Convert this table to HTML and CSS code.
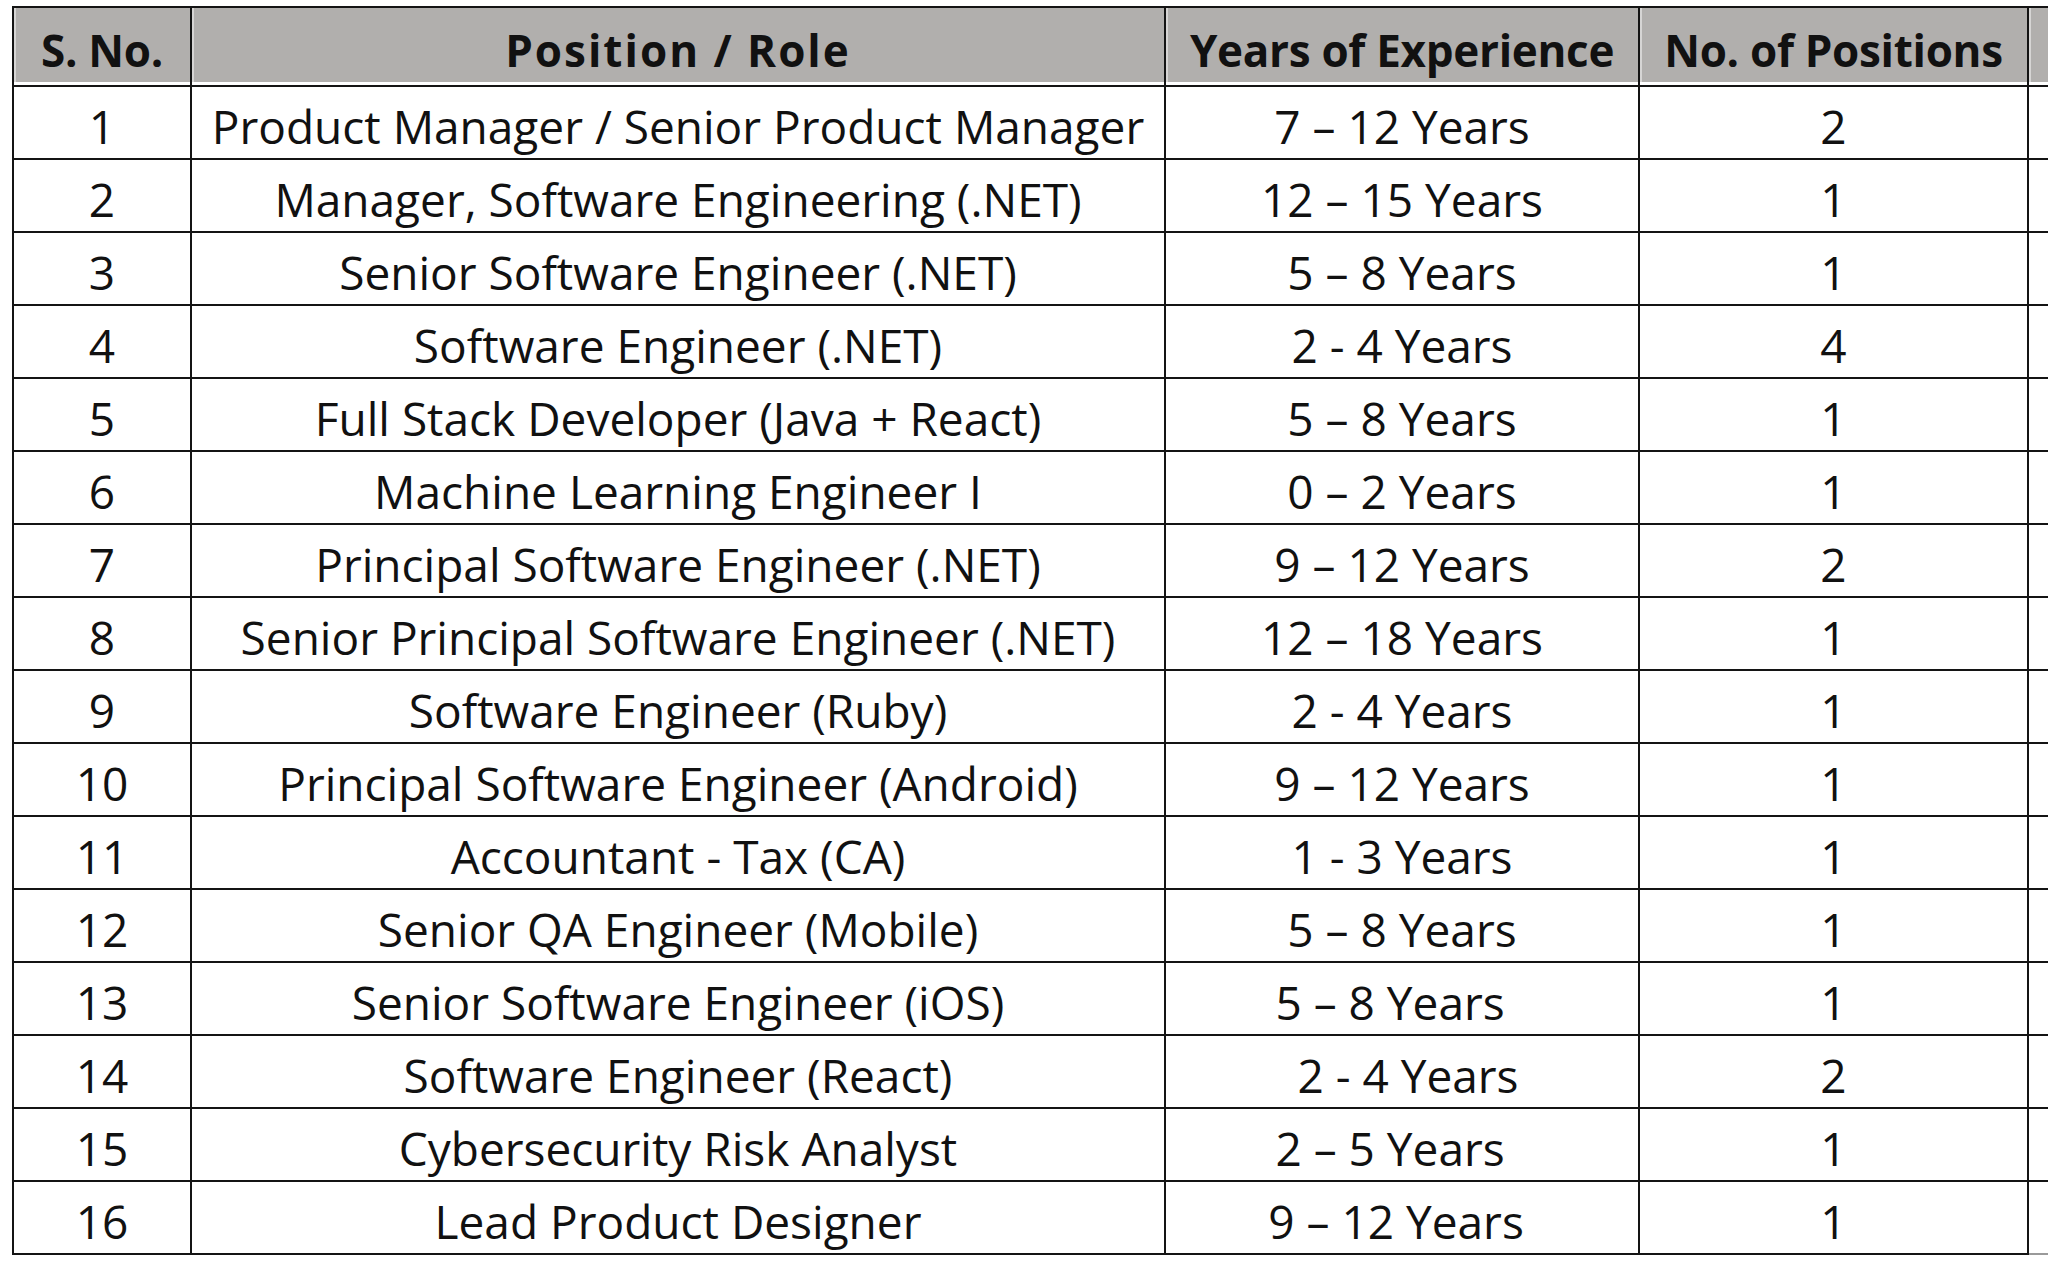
FILE: index.html
```html
<!DOCTYPE html>
<html lang="en">
<head>
<meta charset="utf-8">
<title>Open Positions</title>
<link rel="stylesheet" href="styles.css">
</head>
<body>
<div class="sheet">
  <table class="grid">
    <colgroup>
      <col class="c-no">
      <col class="c-role">
      <col class="c-exp">
      <col class="c-pos">
      <col class="c-extra">
    </colgroup>
    <thead>
      <tr>
        <th>S. No.</th>
        <th class="wide">Position / Role</th>
        <th>Years of Experience</th>
        <th>No. of Positions</th>
        <th class="extra"></th>
      </tr>
    </thead>
    <tbody>
      <tr><td>1</td><td>Product Manager / Senior Product Manager</td><td>7 – 12 Years</td><td>2</td><td class="extra"></td></tr>
      <tr><td>2</td><td>Manager, Software Engineering (.NET)</td><td>12 – 15 Years</td><td>1</td><td class="extra"></td></tr>
      <tr><td>3</td><td>Senior Software Engineer (.NET)</td><td>5 – 8 Years</td><td>1</td><td class="extra"></td></tr>
      <tr><td>4</td><td>Software Engineer (.NET)</td><td>2 - 4 Years</td><td>4</td><td class="extra"></td></tr>
      <tr><td>5</td><td>Full Stack Developer (Java + React)</td><td>5 – 8 Years</td><td>1</td><td class="extra"></td></tr>
      <tr><td>6</td><td>Machine Learning Engineer I</td><td>0 – 2 Years</td><td>1</td><td class="extra"></td></tr>
      <tr><td>7</td><td>Principal Software Engineer (.NET)</td><td>9 – 12 Years</td><td>2</td><td class="extra"></td></tr>
      <tr><td>8</td><td>Senior Principal Software Engineer (.NET)</td><td>12 – 18 Years</td><td>1</td><td class="extra"></td></tr>
      <tr><td>9</td><td>Software Engineer (Ruby)</td><td>2 - 4 Years</td><td>1</td><td class="extra"></td></tr>
      <tr><td>10</td><td>Principal Software Engineer (Android)</td><td>9 – 12 Years</td><td>1</td><td class="extra"></td></tr>
      <tr><td>11</td><td>Accountant - Tax (CA)</td><td>1 - 3 Years</td><td>1</td><td class="extra"></td></tr>
      <tr><td>12</td><td>Senior QA Engineer (Mobile)</td><td>5 – 8 Years</td><td>1</td><td class="extra"></td></tr>
      <tr><td>13</td><td>Senior Software Engineer (iOS)</td><td>5 – 8 Years&nbsp;&nbsp;</td><td>1</td><td class="extra"></td></tr>
      <tr><td>14</td><td>Software Engineer (React)</td><td>&nbsp;2 - 4 Years</td><td>2</td><td class="extra"></td></tr>
      <tr><td>15</td><td>Cybersecurity Risk Analyst</td><td>2 – 5 Years&nbsp;&nbsp;</td><td>1</td><td class="extra"></td></tr>
      <tr><td>16</td><td>Lead Product Designer</td><td>9 – 12 Years&nbsp;</td><td>1</td><td class="extra"></td></tr>
    </tbody>
  </table>
</div>
</body>
</html>
```

FILE: styles.css
```css
html, body {
  margin: 0;
  padding: 0;
  background: #ffffff;
  overflow: hidden;
}

.sheet {
  width: 2200px;
  padding: 6px 0 0 12px;
  font-family: "Open Sans", "Liberation Sans", sans-serif;
  color: #111111;
}

.grid {
  border-collapse: collapse;
  table-layout: fixed;
  width: 2115px;
}

.c-no { width: 178px; }
.c-role { width: 974px; }
.c-exp { width: 474px; }
.c-pos { width: 389px; }
.c-extra { width: 100px; }

.grid th,
.grid td {
  border: 2px solid #141414;
  text-align: center;
  white-space: nowrap;
  padding: 0;
  line-height: 1.2;
}

.grid th {
  height: 79px;
  box-sizing: border-box;
  background: #b1afad;
  box-shadow: inset 0 -3px 0 #ffffff, inset 2px 0 0 #d6d5d4;
  font-weight: 700;
  font-size: 44px;
  letter-spacing: -0.3px;
  padding-top: 7px;
  vertical-align: middle;
}

.grid th.wide {
  letter-spacing: 2px;
}

.grid td {
  height: 73px;
  box-sizing: border-box;
  font-size: 46px;
  font-weight: 400;
  letter-spacing: 0;
  padding-top: 8px;
  vertical-align: middle;
}

.grid tbody tr:last-child td.extra {
  border-bottom-color: #9a9a9a;
}
```
